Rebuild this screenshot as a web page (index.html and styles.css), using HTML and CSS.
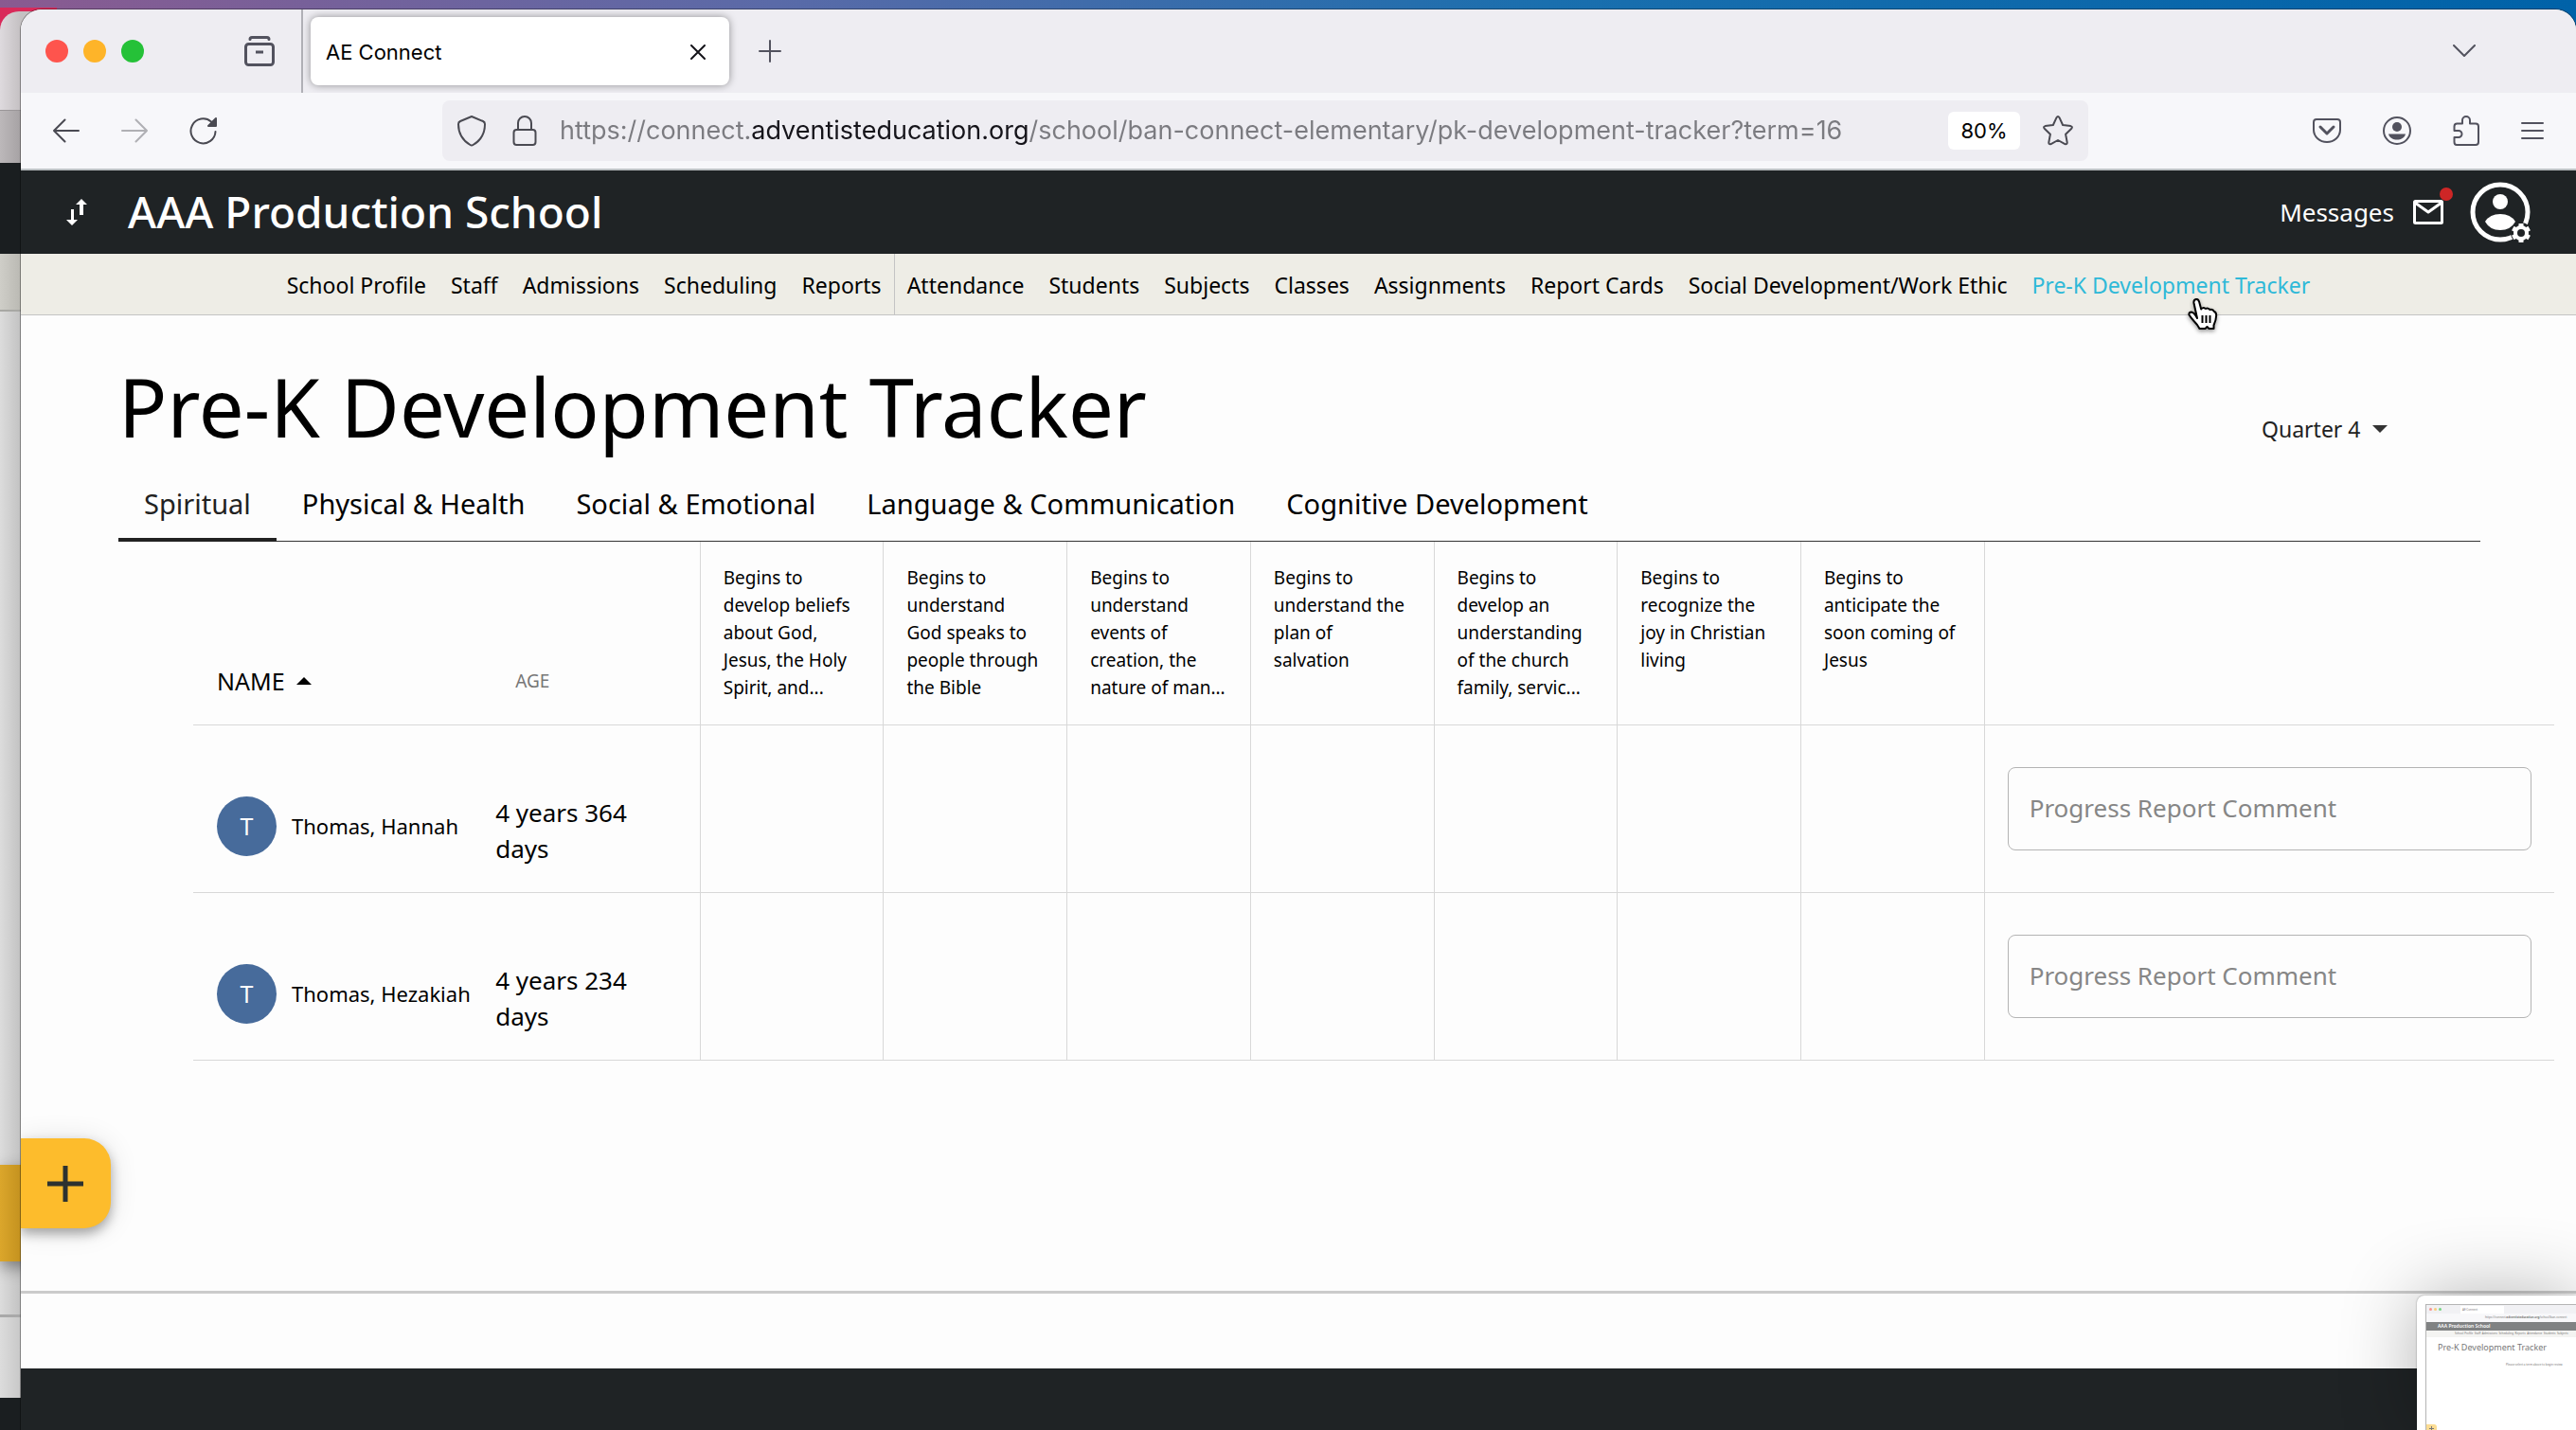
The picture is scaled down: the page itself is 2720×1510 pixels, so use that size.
FILE: index.html
```html
<!DOCTYPE html>
<html lang="en">
  <head>
    <meta charset="UTF-8" />
    <meta name="viewport" content="width=device-width, initial-scale=1.0" />
    <title>AE Connect</title>
    <link rel="stylesheet" href="styles.css" />
  </head>
  <body>
    <!-- window behind -->
    <div class="back-window">
      <div class="back-tabs"></div>
      <div class="back-toolbar"></div>
      <div class="back-header"></div>
      <div class="back-nav"></div>
      <div class="back-content"><div class="back-fab"></div></div>
      <div class="back-space"></div>
      <div class="back-footer"></div>
    </div>

    <div class="window">
      <div class="tab-strip">
        <div class="lights">
          <button type="button" class="light red" aria-label="Close window"></button>
          <button type="button" class="light yellow" aria-label="Minimize"></button>
          <button type="button" class="light green" aria-label="Zoom"></button>
        </div>
        <button type="button" class="icon-btn view-btn" aria-label="Firefox View">
          <svg width="32" height="32" viewBox="0 0 32 32" fill="none" stroke="#52525e" stroke-width="3" stroke-linecap="round">
            <path d="M6 3.500q0-2 2-2h16q2 0 2 2" />
            <rect x="1.500" y="8.500" width="29" height="22" rx="3" />
            <path d="M12 17h8" stroke-linecap="butt" />
          </svg>
        </button>
        <div class="browser-tab">
          <span>AE Connect</span>
          <button type="button" class="icon-btn" aria-label="Close tab">
            <svg width="16" height="16" viewBox="0 0 16 16" stroke="#15141a" stroke-width="2" stroke-linecap="round">
              <path d="M1 1l14 14M15 1L1 15" />
            </svg>
          </button>
        </div>
        <button type="button" class="icon-btn new-tab" aria-label="New tab">
          <svg width="24" height="24" viewBox="0 0 24 24" stroke="#52525e" stroke-width="2" stroke-linecap="round">
            <path d="M12 1v22M1 12h22" />
          </svg>
        </button>
        <button type="button" class="icon-btn list-tabs" aria-label="List all tabs">
          <svg width="24" height="14" viewBox="0 0 24 14" fill="none" stroke="#52525e" stroke-width="2" stroke-linecap="round" stroke-linejoin="round">
            <path d="M1 1l11 11L23 1" />
          </svg>
        </button>
      </div>

      <div class="toolbar">
        <div class="nav-buttons">
          <button type="button" class="icon-btn" aria-label="Back">
            <svg width="28" height="26" viewBox="0 0 28 26" fill="none" stroke="#4a4a52" stroke-width="2" stroke-linecap="round" stroke-linejoin="round">
              <path d="M27 13H1M12.500 1.500L1 13l11.500 11.500" />
            </svg>
          </button>
          <button type="button" class="icon-btn" aria-label="Forward" disabled>
            <svg width="28" height="26" viewBox="0 0 28 26" fill="none" stroke="#b0b0b4" stroke-width="2" stroke-linecap="round" stroke-linejoin="round">
              <path d="M1 13h26M15.500 1.500L27 13 15.500 24.500" />
            </svg>
          </button>
          <button type="button" class="icon-btn" aria-label="Reload">
            <svg width="30" height="30" viewBox="0 0 30 30" fill="none" stroke="#4a4a52" stroke-width="2" stroke-linecap="round">
              <path d="M27.500 16A13 13 0 1 1 23 5.500" />
              <path d="M28 2v8h-8z" fill="#4a4a52" stroke-linejoin="round" />
            </svg>
          </button>
        </div>

        <div class="url-bar">
          <svg width="30" height="34" viewBox="0 0 30 34" fill="none" stroke="#4a4a52" stroke-width="2" stroke-linejoin="round">
            <path d="M15 2l12 5q2 1 2 3c0 10-4 17-12.500 22q-1.500 1-3 0C5 27 1 20 1 10q0-2 2-3z" />
          </svg>
          <svg width="26" height="34" viewBox="0 0 26 34" fill="none" stroke="#4a4a52" stroke-width="2">
            <rect x="1.500" y="16" width="23" height="16" rx="3" />
            <path d="M6 16V9a7 7 0 0 1 14 0v7" />
          </svg>
          <input
            type="text"
            class="url"
            aria-label="Address"
            value="https://connect.adventisteducation.org/school/ban-connect-elementary/pk-development-tracker?term=16"
          />
          <button type="button" class="zoom-level">80%</button>
          <button type="button" class="icon-btn" aria-label="Bookmark">
            <svg width="32" height="32" viewBox="0 0 32 32" fill="none" stroke="#4a4a52" stroke-width="2" stroke-linejoin="round">
              <path d="M14.500 2.200q1.500-2.400 3 0l3.600 7.800 8.400 1.100q2.300.6.800 2.600l-6.200 6 1.600 8.700q0 2.400-2.300 1.700L16 26l-7.400 4.100q-2.300.7-2.300-1.700l1.600-8.700-6.200-6q-1.500-2 .8-2.600l8.400-1.100z" />
            </svg>
          </button>
        </div>

        <div class="tools">
          <button type="button" class="icon-btn" aria-label="Save to Pocket">
            <svg width="30" height="28" viewBox="0 0 30 28" fill="none" stroke="#52525e" stroke-width="2" stroke-linecap="round" stroke-linejoin="round">
              <path d="M4 2h22q3 0 3 3v8a14 13 0 0 1-28 0V5q0-3 3-3z" />
              <path d="M8 10l7 7 7-7" stroke-width="3" />
            </svg>
          </button>
          <button type="button" class="icon-btn" aria-label="Account">
            <svg width="30" height="30" viewBox="0 0 30 30">
              <circle cx="15" cy="15" r="14" fill="none" stroke="#52525e" stroke-width="2" />
              <circle cx="15" cy="11" r="5" fill="#52525e" />
              <path d="M6 18.500h18c-1 4-5 6-9 6s-8-2-9-6z" fill="#52525e" />
            </svg>
          </button>
          <button type="button" class="icon-btn" aria-label="Extensions">
            <svg width="28" height="34" viewBox="0 0 28 34" fill="none" stroke="#52525e" stroke-width="2" stroke-linejoin="round">
              <path d="M1.500 17v-4.500q0-3 3-3H10V6a4 4 0 0 1 8 0v3.500h6q3 0 3 3V29q0 3-3 3H4q-2.500 0-2.500-3v-5H6a3.500 3.500 0 0 0 0-7z" />
            </svg>
          </button>
          <button type="button" class="icon-btn" aria-label="Menu">
            <svg width="24" height="20" viewBox="0 0 24 20" stroke="#52525e" stroke-width="2" stroke-linecap="round">
              <path d="M1 2h22M1 10h22M1 18h22" />
            </svg>
          </button>
        </div>
      </div>

      <header class="app-header">
        <button type="button" class="icon-btn" aria-label="Switch school">
          <svg width="22" height="30" viewBox="0 0 22 30" fill="#fff">
            <path d="M16 1l6 6h-4v11h-4V7h-4zM5 12h3v11h4l-6 6-6-6h5z" />
          </svg>
        </button>
        <a href="#" class="school">AAA Production School</a>
        <a href="#" class="messages">
          Messages
          <span class="mail">
            <svg width="32" height="26" viewBox="0 0 32 26" fill="none" stroke="#fff" stroke-width="3" stroke-linejoin="round">
              <rect x="1.500" y="1.500" width="29" height="23" rx="1" />
              <path d="M2 3l14 10L30 3" />
            </svg>
            <span class="unread"></span>
          </span>
        </a>
        <button type="button" class="icon-btn" aria-label="Account settings">
          <svg width="64" height="64" viewBox="0 0 64 64">
            <circle cx="32" cy="32" r="29" fill="none" stroke="#fff" stroke-width="5" />
            <circle cx="32" cy="21" r="8" fill="#fff" />
            <path d="M16 42q5-8 16-8t16 8q-5 9-16 9t-16-9z" fill="#fff" />
            <circle cx="54" cy="54" r="11" fill="#1f2325" />
            <g fill="#fff">
              <circle cx="54" cy="54" r="8" />
              <rect x="51.500" y="44" width="5" height="20" />
              <rect x="51.500" y="44" width="5" height="20" transform="rotate(60 54 54)" />
              <rect x="51.500" y="44" width="5" height="20" transform="rotate(120 54 54)" />
            </g>
            <circle cx="54" cy="54" r="4" fill="#1f2325" />
          </svg>
        </button>
      </header>

      <nav class="main-nav">
        <a href="#">School Profile</a>
        <a href="#">Staff</a>
        <a href="#">Admissions</a>
        <a href="#">Scheduling</a>
        <a href="#" class="last">Reports</a>
        <a href="#">Attendance</a>
        <a href="#">Students</a>
        <a href="#">Subjects</a>
        <a href="#">Classes</a>
        <a href="#">Assignments</a>
        <a href="#">Report Cards</a>
        <a href="#">Social Development/Work Ethic</a>
        <a href="#" class="active">
          Pre-K Development Tracker
          <svg class="pointer" width="32" height="36" viewBox="0 0 32 36" fill="#fff" stroke="#000" stroke-width="2" stroke-linejoin="round">
            <path d="M10 21L6.500 5q-.5-3.500 2.300-4 2.500-.3 3.400 3l2 7.500q1.500-2.500 4.800-.5 2-1.500 4.500 1 3-1 4.500 2 2 .5 2.200 4-.2 5-2.700 10.500v3.500h-5l-2-2-2 2h-6q-2-4-5.500-7.500Q3 20 1.500 17.500q-.5-3 2.500-3 3 .5 6 6.500z" />
            <path d="M15.500 18v8M19.500 18v8M23.500 18v8" />
          </svg>
        </a>
      </nav>

      <main>
        <div class="page-head">
          <h1>Pre-K Development Tracker</h1>
          <label class="term">
            <select aria-label="Term">
              <option>Quarter 4</option>
            </select>
            <svg width="16" height="8" viewBox="0 0 16 8"><path d="M0 0h16L8 8z" fill="#333" /></svg>
          </label>
        </div>

        <div class="tabs" role="tablist">
          <button type="button" role="tab" aria-selected="true" class="selected">Spiritual</button>
          <button type="button" role="tab">Physical &amp; Health</button>
          <button type="button" role="tab">Social &amp; Emotional</button>
          <button type="button" role="tab">Language &amp; Communication</button>
          <button type="button" role="tab">Cognitive Development</button>
        </div>

        <table class="tracker">
          <colgroup>
            <col class="col-name" />
            <col class="col-age" />
            <col class="col-skill" span="7" />
            <col />
          </colgroup>
          <thead>
            <tr>
              <th class="name-head">
                <button type="button">
                  NAME
                  <svg width="16" height="8" viewBox="0 0 16 8"><path d="M0 8h16L8 0z" /></svg>
                </button>
              </th>
              <th class="age-head">AGE</th>
              <th class="skill">Begins to develop beliefs about God, Jesus, the Holy Spirit, and...</th>
              <th class="skill">Begins to understand God speaks to people through the Bible</th>
              <th class="skill">Begins to understand events of creation, the nature of man...</th>
              <th class="skill">Begins to understand the plan of salvation</th>
              <th class="skill">Begins to develop an understanding of the church family, servic...</th>
              <th class="skill">Begins to recognize the joy in Christian living</th>
              <th class="skill">Begins to anticipate the soon coming of Jesus</th>
              <th class="skill"></th>
            </tr>
          </thead>
          <tbody>
            <tr>
              <td class="name">
                <div class="student"><span class="avatar">T</span>Thomas, Hannah</div>
              </td>
              <td class="age">4 years 364 days</td>
              <td class="skill"></td>
              <td class="skill"></td>
              <td class="skill"></td>
              <td class="skill"></td>
              <td class="skill"></td>
              <td class="skill"></td>
              <td class="skill"></td>
              <td class="skill">
                <input type="text" placeholder="Progress Report Comment" aria-label="Progress Report Comment for Thomas, Hannah" />
              </td>
            </tr>
            <tr>
              <td class="name">
                <div class="student"><span class="avatar">T</span>Thomas, Hezakiah</div>
              </td>
              <td class="age">4 years 234 days</td>
              <td class="skill"></td>
              <td class="skill"></td>
              <td class="skill"></td>
              <td class="skill"></td>
              <td class="skill"></td>
              <td class="skill"></td>
              <td class="skill"></td>
              <td class="skill">
                <input type="text" placeholder="Progress Report Comment" aria-label="Progress Report Comment for Thomas, Hezakiah" />
              </td>
            </tr>
          </tbody>
        </table>
      </main>

      <div class="footer-space"></div>
      <footer></footer>

      <button type="button" class="fab" aria-label="Add">
        <svg width="38" height="38" viewBox="0 0 38 38" stroke="#2d3230" stroke-width="5">
          <path d="M19 0v38M0 19h38" />
        </svg>
      </button>
    </div>

    <!-- floating capture preview -->
    <div class="preview">
      <div class="mini">
        <div class="mini-tabs">
          <i class="dot red"></i><i class="dot yellow"></i><i class="dot green"></i>
          <span class="mini-tab">AE Connect</span>
        </div>
        <div class="mini-url">https://connect.<b>adventisteducation.org</b>/school/ban-connect</div>
        <div class="mini-header">AAA Production School</div>
        <div class="mini-nav">School Profile&nbsp; Staff&nbsp; Admissions&nbsp; Scheduling&nbsp; Reports&nbsp; Attendance&nbsp; Students&nbsp; Subjects</div>
        <div class="mini-title">Pre-K Development Tracker</div>
        <div class="mini-text">Please select a term above to begin review</div>
        <div class="mini-fab">
          <svg width="5" height="5" viewBox="0 0 5 5" stroke="#777"><path d="M2.500 0v5M0 2.500h5" /></svg>
        </div>
      </div>
    </div>
  </body>
</html>
```

FILE: styles.css
```css
* {
  box-sizing: border-box;
}
body {
  margin: 0;
  min-height: 100vh;
  overflow: hidden;
  position: relative;
  background: linear-gradient(to right, #8a5a90, #5a6aa8 30%, #1a6fae 60%, #0062a8);
  font-family: "Noto Sans", "Open Sans", sans-serif;
  font-size: 23px;
  color: #000;
}
button,
input,
select {
  font-family: inherit;
  color: inherit;
}
button {
  padding: 0;
  border: none;
  background: none;
  cursor: pointer;
}
a {
  color: inherit;
  text-decoration: none;
}
svg {
  display: block;
  flex: none;
}
.icon-btn {
  flex: none;
}

/* window behind */
.back-window {
  position: absolute;
  top: 8px;
  left: 0;
  bottom: 0;
  width: 60px;
  display: flex;
  flex-direction: column;
  padding-top: 4px;
  background: #d92a5a;
}
.back-tabs {
  height: 105px;
  border-radius: 20px 0 0 0;
  background: linear-gradient(to right, #dedade, #c4c0c2 22px);
  border-bottom: 1px solid #9a9698;
}
.back-toolbar {
  height: 55px;
  background: linear-gradient(to right, #bcb8ba, #a6a2a4 22px);
}
.back-header {
  height: 96px;
  background: #1a1e20;
}
.back-nav {
  height: 61px;
  background: linear-gradient(to right, #cfcec8, #bab9b3 22px);
  border-bottom: 2px solid #a8a8a4;
}
.back-content {
  flex: 1;
  display: flex;
  align-items: flex-end;
  padding-bottom: 56px;
  background: linear-gradient(to right, #dcdcdc, #c2c2c2 22px);
}
.back-fab {
  width: 100%;
  height: 102px;
  background: linear-gradient(to right, #dba62b, #c4921f 22px);
  box-shadow: 0 6px 16px rgba(0, 0, 0, 0.4);
}
.back-space {
  height: 88px;
  border-top: 3px solid #a9a9a9;
  background: linear-gradient(to right, #dcdcdc, #c8c8c8 22px);
}
.back-footer {
  height: 34px;
  background: #1a1e20;
}

/* browser window */
.window {
  position: relative;
  margin: 10px 0 0 22px;
  min-height: calc(100vh - 10px);
  display: flex;
  flex-direction: column;
  background: #fdfdfd;
  border-radius: 22px 22px 0 0;
  overflow: hidden;
  box-shadow: 0 0 0 1px rgba(0, 0, 0, 0.35);
}
.tab-strip {
  height: 88px;
  display: flex;
  align-items: center;
  background: #eeedf2;
  font-family: Inter, sans-serif;
}
.lights {
  display: flex;
  gap: 16px;
  padding-left: 26px;
}
.light {
  width: 24px;
  height: 24px;
  border-radius: 50%;
}
.red {
  background: #fe544d;
}
.yellow {
  background: #feb429;
}
.green {
  background: #25c138;
}
.view-btn {
  align-self: stretch;
  padding: 0 28px 0 106px;
  border-right: 2px solid #b0b0b6;
}
.browser-tab {
  width: 442px;
  height: 72px;
  margin-left: 8px;
  padding: 2px 25px 0 16px;
  display: flex;
  align-items: center;
  justify-content: space-between;
  background: #fff;
  border-radius: 8px;
  box-shadow: 0 0 8px rgba(0, 0, 0, 0.4);
  font-size: 22px;
}
.new-tab {
  margin-left: 31px;
}
.list-tabs {
  margin-left: auto;
  margin-right: 106px;
}
.toolbar {
  height: 82px;
  display: flex;
  align-items: center;
  justify-content: space-between;
  padding: 0 34px;
  background: #f7f7fa;
  border-bottom: 2px solid #bcc0c3;
}
.nav-buttons {
  display: flex;
  align-items: center;
  gap: 44px;
}
.url-bar {
  width: 1738px;
  height: 64px;
  padding: 0 16px;
  display: flex;
  align-items: center;
  background: #eeedf2;
  border-radius: 8px;
}
.url-bar svg + svg {
  margin-left: 28px;
}
.url {
  flex: 1;
  min-width: 0;
  margin-left: 24px;
  padding: 0;
  border: none;
  outline: none;
  font-family: Inter, sans-serif;
  font-size: 27px;
  line-height: 40px;
  color: #7b7b80;
  /* only the domain is dark */
  background: linear-gradient(to right, #7b7b80 202px, #15141a 202px 494px, #7b7b80 494px);
  -webkit-background-clip: text;
  background-clip: text;
  -webkit-text-fill-color: transparent;
}
.zoom-level {
  width: 76px;
  height: 40px;
  margin-right: 24px;
  border-radius: 6px;
  background: #fff;
  font-family: Inter, sans-serif;
  font-size: 22px;
}
.tools {
  display: flex;
  align-items: center;
  gap: 44px;
}

/* app */
.app-header {
  height: 88px;
  display: flex;
  align-items: center;
  padding: 0 48px;
  background: #1f2325;
  color: #fff;
}
.school {
  margin-left: 43px;
  margin-right: auto;
  font-size: 46px;
  font-weight: 500;
  line-height: 86px;
  padding-bottom: 2px;
}
.messages {
  display: flex;
  align-items: center;
  gap: 20px;
  margin-right: 28px;
  font-size: 26px;
}
.mail {
  position: relative;
}
.unread {
  position: absolute;
  top: -13px;
  right: -10px;
  width: 14px;
  height: 14px;
  border-radius: 50%;
  background: #ce2626;
}
.main-nav {
  height: 65px;
  display: flex;
  justify-content: center;
  background: #eeede6;
  border-bottom: 1px solid #c4c4c4;
  line-height: 66px;
}
.main-nav a {
  position: relative;
  height: 64px;
  padding: 0 13px;
  white-space: nowrap;
}
.main-nav .last {
  border-right: 1px solid #c4c4c4;
}
.main-nav .active {
  color: #2fb9d8;
}
.pointer {
  position: absolute;
  left: 178px;
  top: 47px;
  z-index: 2;
  filter: drop-shadow(0 2px 2px rgba(0, 0, 0, 0.4));
}
main {
  flex: 1;
  border-bottom: 3px solid #cbcbcb;
}
.page-head {
  display: flex;
  align-items: baseline;
  justify-content: space-between;
  padding: 48px 199px 0 103px;
}
h1 {
  margin: 0;
  font-size: 85px;
  font-weight: 400;
  line-height: 96px;
}
.term {
  display: flex;
  align-items: center;
  gap: 12px;
}
.term select {
  appearance: none;
  padding: 0;
  border: none;
  background: none;
  font-size: 23px;
  color: #222;
}
.tabs {
  display: flex;
  margin: 34px 101px 0 103px;
  box-shadow: inset 0 -1px #333;
}
.tabs button {
  padding: 0 27px 15px;
  border-bottom: 4px solid transparent;
  font-size: 29px;
  line-height: 42px;
}
.tabs .selected {
  color: #222;
  border-bottom-color: #222;
}
.tracker {
  width: calc(100% - 205px);
  margin-left: 182px;
  table-layout: fixed;
  border-spacing: 0;
}
.col-name {
  width: 12.2%;
}
.col-age {
  width: 9.25%;
}
.col-skill {
  width: 7.77%;
}
th,
td {
  padding: 0 24px;
  border-bottom: 1px solid #d8d8d8;
  font-weight: 400;
  text-align: left;
}
th {
  height: 194px;
  line-height: 28px;
}
td {
  height: 177px;
}
.skill {
  border-left: 1px solid #d8d8d8;
}
th.skill {
  padding-top: 24px;
  vertical-align: top;
  font-size: 19px;
  line-height: 29px;
}
.name-head,
.age-head {
  padding-bottom: 32px;
  vertical-align: bottom;
}
.name-head button {
  display: flex;
  align-items: center;
  gap: 12px;
  font-size: 25px;
  line-height: 28px;
}
.age-head {
  padding-left: 36px;
  font-size: 19px;
  color: #777;
}
td.name {
  padding: 36px 0 0;
}
.name-head {
  padding-left: 25px;
}
.student {
  display: flex;
  align-items: center;
  gap: 16px;
  padding-left: 25px;
  white-space: nowrap;
}
.avatar {
  width: 63px;
  height: 63px;
  border-radius: 50%;
  background: #476b9b;
  color: #fff;
  font-size: 25px;
  line-height: 63px;
  text-align: center;
}
.student {
  font-size: 22px;
}
td.age {
  padding: 46px 50px 0 15px;
  font-size: 26px;
  line-height: 38px;
}
td input {
  display: block;
  width: 100%;
  height: 88px;
  padding: 0 22px 2px;
  border: 1px solid #b4b4b4;
  border-radius: 8px;
  background: none;
  font-size: 26px;
}
td input::placeholder {
  color: #868686;
}
.footer-space {
  height: 79px;
}
footer {
  height: 65px;
  background: #1f2325;
}
.fab {
  position: absolute;
  left: 0;
  bottom: 213px;
  width: 95px;
  height: 95px;
  padding-left: 28px;
  border-radius: 0 28px 28px 0;
  background: #fdbc2c;
  box-shadow: 0 6px 12px rgba(0, 0, 0, 0.3), 0 2px 30px rgba(0, 0, 0, 0.12);
}

/* capture preview in the corner */
.preview {
  position: absolute;
  right: 0;
  bottom: 0;
  width: 168px;
  height: 142px;
  padding: 9px 0 0 9px;
  background: #fff;
  border-radius: 8px 0 0 0;
  box-shadow: 0 0 80px rgba(0, 0, 0, 0.3), 0 0 2px rgba(0, 0, 0, 0.4);
}
.mini {
  position: relative;
  height: 100%;
  overflow: hidden;
  border-top: 1px solid #b5b5b5;
  border-left: 1px solid #b5b5b5;
  white-space: nowrap;
  color: #777;
  font-size: 3px;
}
.mini-tabs {
  height: 9px;
  display: flex;
  align-items: center;
  gap: 2px;
  padding-left: 3px;
  background: #f1f1f4;
}
.dot {
  width: 3px;
  height: 3px;
  border-radius: 50%;
  opacity: 0.6;
}
.mini-tab {
  width: 46px;
  height: 8px;
  margin-left: 18px;
  padding-left: 2px;
  background: #fff;
  line-height: 8px;
}
.mini-url {
  height: 9px;
  padding-left: 62px;
  line-height: 9px;
  background: #f8f8fa;
}
.mini-header {
  height: 9px;
  padding-left: 12px;
  background: #808283;
  color: #fff;
  font-size: 5px;
  font-weight: 600;
  line-height: 9px;
}
.mini-nav {
  height: 7px;
  padding-left: 30px;
  background: #f4f4f2;
  line-height: 7px;
}
.mini-title {
  padding: 5px 0 0 12px;
  font-size: 9px;
  line-height: 12px;
}
.mini-text {
  padding: 9px 0 0 84px;
  font-size: 3px;
  line-height: 6px;
}
.mini-fab {
  position: absolute;
  left: 0;
  bottom: -4px;
  width: 11px;
  height: 10px;
  padding: 2px 3px;
  border-radius: 0 3px 3px 0;
  background: #fbdc93;
}
```
